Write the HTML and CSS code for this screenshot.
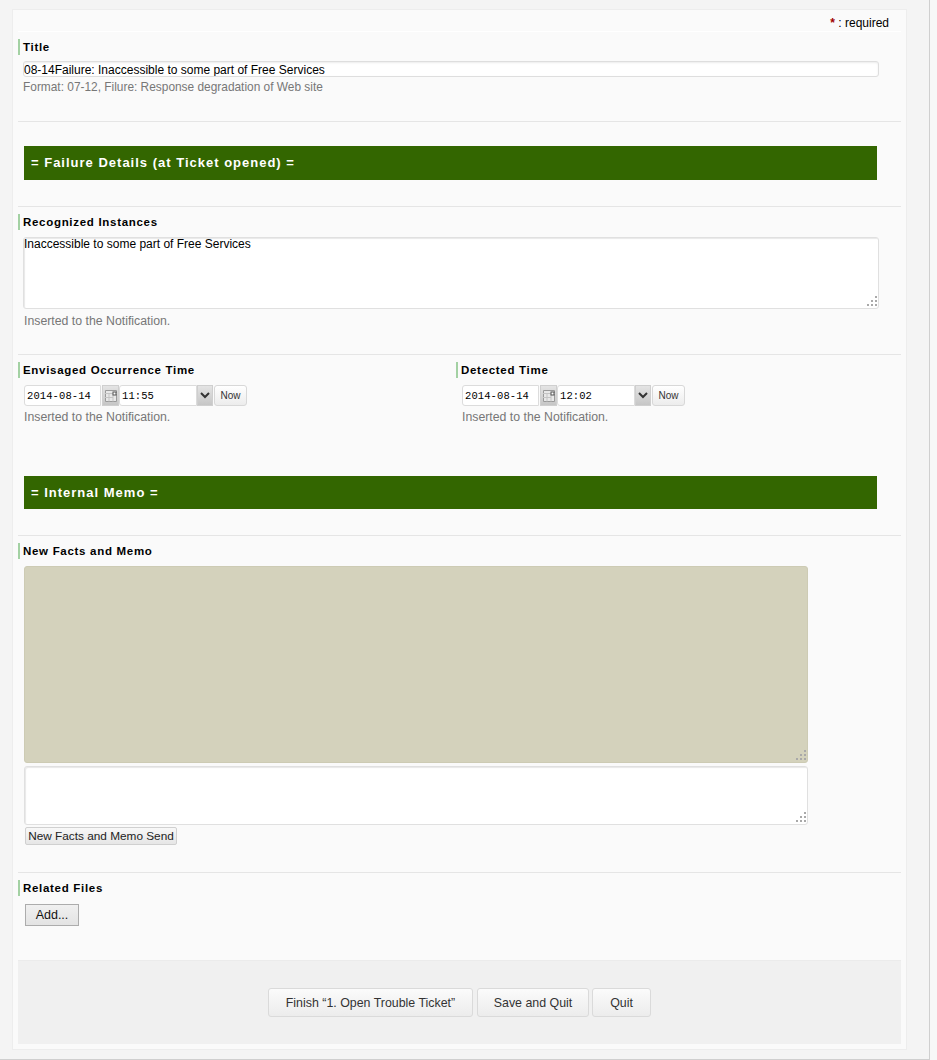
FILE: index.html
```html
<!DOCTYPE html>
<html lang="en">
<head>
<meta charset="utf-8">
<title>Open Trouble Ticket</title>
<link rel="stylesheet" href="styles.css">
</head>
<body>
<svg class="defs" width="0" height="0" aria-hidden="true">
  <symbol id="grip" viewBox="0 0 12 12">
    <g fill="#a9a9a9">
      <rect x="9" y="0" width="2" height="2"/>
      <rect x="5" y="4" width="2" height="2"/><rect x="9" y="4" width="2" height="2"/>
      <rect x="1" y="8" width="2" height="2"/><rect x="5" y="8" width="2" height="2"/><rect x="9" y="8" width="2" height="2"/>
    </g>
  </symbol>
</svg>
<div class="page">
  <form class="panel">
    <div class="required"><span class="star">*</span> : required</div>

    <section class="sec sec-title">
      <h3 class="label">Title</h3>
      <input class="field field-full" type="text" value="08-14Failure: Inaccessible to some part of Free Services">
      <p class="hint hint-format">Format: 07-12, Filure: Response degradation of Web site</p>
    </section>

    <section class="sec sec-band">
      <h2 class="band">= Failure Details (at Ticket opened) =</h2>
    </section>

    <section class="sec sec-instances">
      <h3 class="label">Recognized Instances</h3>
      <div class="area-wrap area-full">
        <textarea class="area area-instances">Inaccessible to some part of Free Services</textarea>
        <svg class="grip"><use href="#grip"/></svg>
      </div>
      <p class="hint">Inserted to the Notification.</p>
    </section>

    <section class="sec sec-times">
      <div class="times">
        <div class="time-col">
          <h3 class="label">Envisaged Occurrence Time</h3>
          <div class="time-row">
            <input class="date" type="text" value="2014-08-14">
            <span class="cal"><svg width="14" height="14" viewBox="0 0 14 14"><path d="M1.500 1.500h11v11h-11z" fill="#e8e8e8" stroke="#9a9a9a"/><path d="M1 4.500h12M5 4.500v8M9 4.500v8M1 8.500h8" stroke="#c4c4c4" fill="none"/><rect x="9" y="3" width="3" height="3" fill="#fff" stroke="#555" stroke-width="1"/></svg></span>
            <input class="clock" type="text" value="11:55">
            <span class="drop"><svg width="10" height="7" viewBox="0 0 10 7"><path d="M1 1l4 4 4-4" fill="none" stroke="#333" stroke-width="2"/></svg></span>
            <button class="now" type="button">Now</button>
          </div>
          <p class="hint">Inserted to the Notification.</p>
        </div>
        <div class="time-col">
          <h3 class="label">Detected Time</h3>
          <div class="time-row">
            <input class="date" type="text" value="2014-08-14">
            <span class="cal"><svg width="14" height="14" viewBox="0 0 14 14"><path d="M1.500 1.500h11v11h-11z" fill="#e8e8e8" stroke="#9a9a9a"/><path d="M1 4.500h12M5 4.500v8M9 4.500v8M1 8.500h8" stroke="#c4c4c4" fill="none"/><rect x="9" y="3" width="3" height="3" fill="#fff" stroke="#555" stroke-width="1"/></svg></span>
            <input class="clock" type="text" value="12:02">
            <span class="drop"><svg width="10" height="7" viewBox="0 0 10 7"><path d="M1 1l4 4 4-4" fill="none" stroke="#333" stroke-width="2"/></svg></span>
            <button class="now" type="button">Now</button>
          </div>
          <p class="hint">Inserted to the Notification.</p>
        </div>
      </div>
      <h2 class="band band-memo">= Internal Memo =</h2>
    </section>

    <section class="sec sec-memo">
      <h3 class="label">New Facts and Memo</h3>
      <div class="area-wrap area-memo">
        <div class="log"></div>
        <svg class="grip"><use href="#grip"/></svg>
      </div>
      <div class="area-wrap area-memo">
        <textarea class="area area-new"></textarea>
        <svg class="grip"><use href="#grip"/></svg>
      </div>
      <button class="send" type="button">New Facts and Memo Send</button>
    </section>

    <section class="sec sec-files">
      <h3 class="label">Related Files</h3>
      <button class="add" type="button">Add...</button>
    </section>

    <div class="actions">
      <button class="action action-finish" type="button">Finish “1. Open Trouble Ticket”</button>
      <button class="action action-save" type="button">Save and Quit</button>
      <button class="action action-quit" type="button">Quit</button>
    </div>
  </form>
</div>
</body>
</html>
```
FILE: styles.css
```css
* { box-sizing: border-box; }
html, body { margin: 0; padding: 0; }
body {
  width: 937px;
  height: 1060px;
  overflow: hidden;
  background: #f7f7f7;
  font-family: "Liberation Sans", Arial, sans-serif;
  font-size: 11px;
  color: #000;
}
.defs { position: absolute; }
.page {
  width: 930px;
  height: 1060px;
  padding: 9px 0 0 12px;
  background: #f4f4f4;
  border-right: 1px solid #cfcfcf;
  border-bottom: 1px solid #cfcfcf;
}
.panel {
  width: 895px;
  height: 1041px;
  padding: 0 5px;
  background: #fafafa;
  border: 1px solid #ededed;
}
.required {
  height: 21px;
  padding: 6px 12px 0 0;
  line-height: 14px;
  text-align: right;
  font-size: 12px;
}
.star { color: #a00000; font-weight: bold; }
.sec { border-top: 1px solid #e5e5e5; }
.sec-title { height: 90px; padding-top: 7px; border-top-color: #fff; }
.sec-band { height: 85px; padding-top: 24px; }
.sec-instances { height: 148px; padding-top: 7px; }
.sec-times { height: 181px; padding-top: 7px; }
.sec-memo { height: 337px; padding-top: 7px; }
.sec-files { height: 88px; padding-top: 7px; }

.label {
  height: 16px;
  margin: 0;
  padding-left: 3px;
  border-left: 2px solid #a3d1a3;
  font-size: 11.500px;
  line-height: 16px;
  font-weight: bold;
  color: #000;
  letter-spacing: .7px;
}
.hint {
  margin: 3px 0 0 6px;
  line-height: 14px;
  font-size: 12.300px;
  color: #777;
}
.hint-format { margin-left: 5px; font-size: 11.900px; }
.field {
  display: block;
  width: 856px;
  height: 16px;
  margin: 6px 0 0 5px;
  padding: 1px 0 0 0;
  border: 1px solid #dedede;
  border-radius: 3px;
  background: #fff;
  box-shadow: inset 0 1px 2px #ececec;
  outline: none;
  font: 12px "Liberation Sans", Arial, sans-serif;
  color: #000;
}
.band {
  width: 853px;
  height: 34px;
  margin: 0 0 0 6px;
  padding-left: 7px;
  background: #336600;
  color: #fff;
  font-size: 13px;
  font-weight: bold;
  line-height: 34px;
  letter-spacing: 1px;
}
.band-memo { height: 33px; margin-top: 35px; }

.area-wrap { position: relative; margin-left: 5px; }
.area-full { width: 856px; height: 72px; margin-top: 7px; }
.area-memo { width: 784px; margin-left: 6px; }
.area {
  display: block;
  width: 100%;
  height: 100%;
  padding: 0;
  resize: none;
  border: 1px solid #e0e0e0;
  border-radius: 3px;
  background: #fff;
  box-shadow: inset 1px 1px 1px #e8e8e8;
  outline: none;
  font: 12px/13px "Liberation Sans", Arial, sans-serif;
  color: #000;
}
.sec-instances .hint { margin-top: 5px; }
.grip { position: absolute; right: 1px; bottom: 1px; width: 12px; height: 12px; }
.log {
  height: 100%;
  background: #d4d2bc;
  border: 1px solid #cdcbb4;
  border-radius: 3px;
}
.sec-memo .area-wrap:nth-of-type(1) { height: 197px; margin-top: 7px; }
.sec-memo .area-wrap:nth-of-type(2) { height: 59px; margin-top: 3px; }

.times { display: flex; height: 79px; }
.time-col { width: 438px; }
.time-row { display: flex; height: 22px; margin: 7px 0 0 6px; }
.date, .clock {
  height: 21px;
  padding: 0 0 0 2px;
  border: 1px solid #dcdcdc;
  border-radius: 3px 0 0 3px;
  background: #fff;
  font: 10.500px "Liberation Mono", monospace;
  letter-spacing: 0.1px;
  color: #000;
  outline: none;
}
.date { width: 77px; }
.clock { width: 78px; }
.cal, .drop {
  display: flex;
  align-items: center;
  justify-content: center;
  height: 21px;
  width: 17px;
  background: linear-gradient(#e4e4e4, #c6c6c6);
  border: 1px solid #cfcfcf;
}
.cal { margin-left: 1px; }
.drop { width: 16px; }
.now {
  width: 33px;
  height: 21px;
  margin-left: 1px;
  padding: 0;
  border: 1px solid #d8d8d8;
  border-radius: 3px;
  background: linear-gradient(#fff, #ececec);
  font: 10px "Liberation Sans", Arial, sans-serif;
  color: #333;
}
.send {
  display: block;
  width: 152px;
  height: 18px;
  margin: 2px 0 0 7px;
  padding: 0;
  border: 1px solid #d0d0d0;
  border-radius: 2px;
  background: linear-gradient(#f8f8f8, #e6e6e6);
  font: 11.800px "Liberation Sans", Arial, sans-serif;
  color: #222;
  white-space: nowrap;
}
.add {
  display: block;
  width: 54px;
  height: 22px;
  margin: 8px 0 0 7px;
  padding: 0;
  border: 1px solid #acacac;
  border-radius: 0;
  background: linear-gradient(#f0f0f0, #e3e3e3);
  font: 12.500px "Liberation Sans", Arial, sans-serif;
  color: #111;
}
.actions {
  display: flex;
  justify-content: center;
  gap: 4px;
  height: 84px;
  padding: 27px 0 0 0;
  background: #f0f0f0;
  border-top: 1px solid #ebebeb;
}
.action {
  height: 29px;
  padding: 0;
  border: 1px solid #dadada;
  border-radius: 3px;
  background: linear-gradient(#fbfbfb, #ececec);
  font: 12.400px "Liberation Sans", Arial, sans-serif;
  color: #333;
  white-space: nowrap;
}
.action-finish { width: 205px; }
.action-save { width: 112px; }
.action-quit { width: 59px; margin-left: -1px; }
```
